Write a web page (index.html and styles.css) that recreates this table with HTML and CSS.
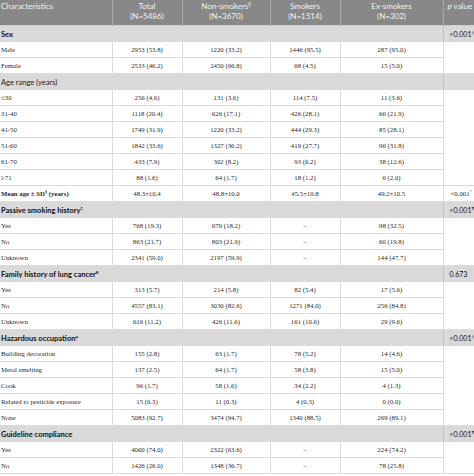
FILE: index.html
```html
<!DOCTYPE html>
<html>
<head>
<meta charset="utf-8">
<link rel="stylesheet" href="styles.css">
</head>
<body>
<div class="wrap">
<table class="tbl">
<colgroup>
<col class="c1"><col class="c2"><col class="c3"><col class="c4"><col class="c5"><col class="c6">
</colgroup>
<thead>
<tr class="head">
<th class="first">Characteristics</th>
<th>Total<br>(N=5486)</th>
<th>Non-smokers<sup>§</sup><br>(N=3670)</th>
<th>Smokers<br>(N=1514)</th>
<th>Ex-smokers<br>(N=302)</th>
<th class="pv"><i>p</i> value</th>
</tr>
</thead>
<tbody>
<tr class="sec"><td colspan="5" class="lab">Sex</td><td class="pv">&lt;0.001<sup>†</sup></td></tr>
<tr><td class="first">Male</td><td>2953 (53.8)</td><td>1220 (33.2)</td><td>1446 (95.5)</td><td>287 (95.0)</td><td class="pm" rowspan="2"></td></tr>
<tr><td class="first">Female</td><td>2533 (46.2)</td><td>2450 (66.8)</td><td>68 (4.5)</td><td>15 (5.0)</td></tr>

<tr class="sec"><td colspan="5" class="lab reg">Age range (years)</td><td class="pv"></td></tr>
<tr><td class="first">≤30</td><td>256 (4.6)</td><td>131 (3.6)</td><td>114 (7.5)</td><td>11 (3.6)</td><td class="pm" rowspan="6"></td></tr>
<tr><td class="first">31-40</td><td>1118 (20.4)</td><td>626 (17.1)</td><td>426 (28.1)</td><td>66 (21.9)</td></tr>
<tr><td class="first">41-50</td><td>1749 (31.9)</td><td>1220 (33.2)</td><td>444 (29.3)</td><td>85 (28.1)</td></tr>
<tr><td class="first">51-60</td><td>1842 (33.6)</td><td>1327 (36.2)</td><td>419 (27.7)</td><td>96 (31.8)</td></tr>
<tr><td class="first">61-70</td><td>433 (7.9)</td><td>302 (8.2)</td><td>93 (6.2)</td><td>38 (12.6)</td></tr>
<tr><td class="first">≥71</td><td>88 (1.6)</td><td>64 (1.7)</td><td>18 (1.2)</td><td>6 (2.0)</td></tr>
<tr><td class="first strong">Mean age ± SD<sup>§</sup> (years)</td><td>48.3±10.4</td><td>48.8±10.0</td><td>45.5±10.8</td><td>49.2±10.5</td><td class="pd">&lt;0.001<sup>*</sup></td></tr>

<tr class="sec"><td colspan="5" class="lab">Passive smoking history<sup>ζ</sup></td><td class="pv">&lt;0.001<sup>¶</sup></td></tr>
<tr><td class="first">Yes</td><td>768 (19.3)</td><td>670 (18.2)</td><td>–</td><td>98 (32.5)</td><td class="pm" rowspan="3"></td></tr>
<tr><td class="first">No</td><td>863 (21.7)</td><td>803 (21.9)</td><td>–</td><td>60 (19.8)</td></tr>
<tr><td class="first">Unknown</td><td>2341 (59.0)</td><td>2197 (59.9)</td><td>–</td><td>144 (47.7)</td></tr>

<tr class="sec"><td colspan="5" class="lab">Family history of lung cancer<sup>θ</sup></td><td class="pv">0.673</td></tr>
<tr><td class="first">Yes</td><td>313 (5.7)</td><td>214 (5.8)</td><td>82 (5.4)</td><td>17 (5.6)</td><td class="pm" rowspan="3"></td></tr>
<tr><td class="first">No</td><td>4557 (83.1)</td><td>3030 (82.6)</td><td>1271 (84.0)</td><td>256 (84.8)</td></tr>
<tr><td class="first">Unknown</td><td>616 (11.2)</td><td>426 (11.6)</td><td>161 (10.6)</td><td>29 (9.6)</td></tr>

<tr class="sec"><td colspan="5" class="lab">Hazardous occupation<sup>μ</sup></td><td class="pv">&lt;0.001<sup>†</sup></td></tr>
<tr><td class="first">Building decoration</td><td>155 (2.8)</td><td>63 (1.7)</td><td>78 (5.2)</td><td>14 (4.6)</td><td class="pm" rowspan="5"></td></tr>
<tr><td class="first">Metal smelting</td><td>137 (2.5)</td><td>64 (1.7)</td><td>58 (3.8)</td><td>15 (5.0)</td></tr>
<tr><td class="first">Cook</td><td>96 (1.7)</td><td>58 (1.6)</td><td>34 (2.2)</td><td>4 (1.3)</td></tr>
<tr><td class="first">Related to pesticide exposure</td><td>15 (0.3)</td><td>11 (0.3)</td><td>4 (0.3)</td><td>0 (0.0)</td></tr>
<tr><td class="first">None</td><td>5083 (92.7)</td><td>3474 (94.7)</td><td>1340 (88.5)</td><td>269 (89.1)</td></tr>

<tr class="sec"><td colspan="5" class="lab">Guideline compliance</td><td class="pv">&lt;0.001<sup>¶</sup></td></tr>
<tr><td class="first">Yes</td><td>4060 (74.0)</td><td>2322 (63.6)</td><td>–</td><td>224 (74.2)</td><td class="pm" rowspan="2"></td></tr>
<tr><td class="first">No</td><td>1426 (26.0)</td><td>1348 (36.7)</td><td>–</td><td>78 (25.8)</td></tr>
</tbody>
</table>
</div>
</body>
</html>
```

FILE: styles.css
```css
html, body {
  margin: 0;
  padding: 0;
  background: #ffffff;
}
body {
  width: 474px;
  height: 476px;
  overflow: hidden;
}
.wrap {
  width: 474px;
  overflow: hidden;
}
.tbl {
  border-collapse: collapse;
  table-layout: fixed;
  width: 500px;
  font-family: "Liberation Serif", serif;
  font-size: 6.8px;
  color: #2b2b2b;
}
.c1 { width: 112px; }
.c2 { width: 70px; }
.c3 { width: 88px; }
.c4 { width: 70px; }
.c5 { width: 103px; }
.c6 { width: 57px; }

.tbl td, .tbl th {
  padding: 0;
  white-space: nowrap;
  overflow: hidden;
}
.tbl sup {
  font-size: 0.6em;
  line-height: 0;
  vertical-align: 0.7em;
}

/* header */
.head th {
  height: 24px;
  background: #888888;
  color: #f3f3f3;
  font-family: Lato, "Open Sans", sans-serif;
  font-weight: normal;
  font-size: 8px;
  line-height: 10px;
  text-align: center;
  vertical-align: top;
  padding-top: 1px;
  border-left: 1px solid #a9a9a9;
}
.head th.first {
  text-align: left;
  padding-left: 1px;
  border-left: none;
}
.head th.pv {
  text-align: left;
  padding-left: 4px;
}

/* section rows */
.sec td {
  height: 16px;
  background: #d9d9d9;
  font-family: Lato, "Open Sans", sans-serif;
  font-size: 7.5px;
  color: #111111;
  vertical-align: middle;
  border-top: 1px solid #cfcfcf;
}
.sec td.lab {
  font-weight: bold;
  padding-left: 1px;
}
.sec td.lab.reg {
  font-weight: normal;
  color: #222222;
}
.sec td.pv {
  border-left: 1px solid #c4c4c4;
  padding-left: 6px;
  font-size: 7px;
  color: #111111;
}

/* data rows */
.tbl tbody tr:not(.sec) td {
  height: 15px;
  text-align: center;
  vertical-align: middle;
  border-bottom: 1px solid #dcdcdc;
  border-left: 1px solid #dcdcdc;
}
.tbl tbody tr:not(.sec) td.first {
  text-align: left;
  padding-left: 1px;
  border-left: none;
}
.tbl tbody tr:not(.sec) td.strong {
  font-weight: bold;
  color: #2a2a2a;
}
.tbl tbody tr:not(.sec) td.pm {
  background: #ffffff;
}
.tbl tbody tr:not(.sec) td.pd {
  text-align: left;
  padding-left: 7px;
}
```
